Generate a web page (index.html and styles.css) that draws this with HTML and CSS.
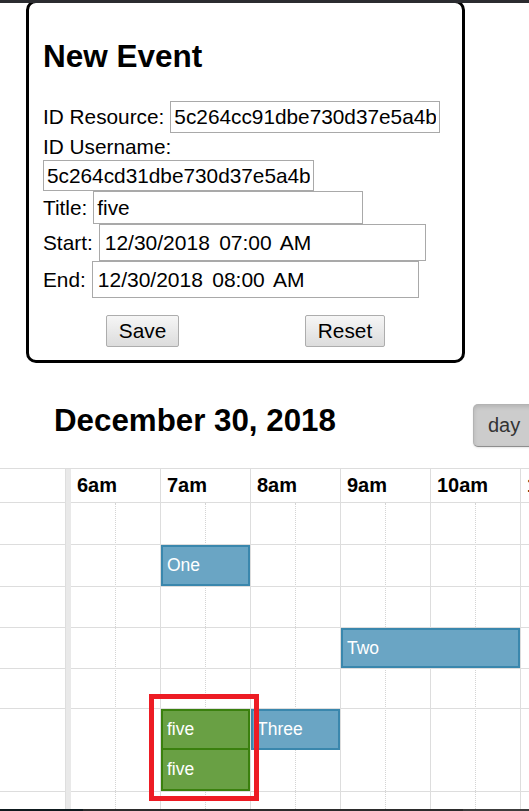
FILE: index.html
```html
<!DOCTYPE html>
<html lang="en">
<head>
<meta charset="utf-8">
<title>New Event</title>
<link rel="stylesheet" href="styles.css">
</head>
<body>
<div class="topbar"></div>

<form class="card">
  <h2 class="card-title">New Event</h2>
  <div class="form-row row-resource"><label>ID Resource:</label><input class="txt" type="text" value="5c264cc91dbe730d37e5a4b"></div>
  <div class="label-line">ID Username:</div>
  <div class="form-row row-user"><input class="txt txt-user" type="text" value="5c264cd31dbe730d37e5a4b"></div>
  <div class="form-row row-title"><label>Title:</label><input class="txt" type="text" value="five"></div>
  <div class="form-row row-date"><label>Start:</label><input class="txt dt" type="text" value="12/30/2018 07:00 AM"></div>
  <div class="form-row row-date"><label>End:</label><input class="txt dt" type="text" value="12/30/2018 08:00 AM"></div>
  <div class="actions">
    <button class="btn" type="button">Save</button>
    <button class="btn" type="button">Reset</button>
  </div>
</form>

<section class="cal">
  <div class="toolbar">
    <h2 class="cal-title">December 30, 2018</h2>
    <button class="view-btn" type="button">day</button>
  </div>

  <div class="sched">
    <div class="res-col">
      <div class="res-cell row-head"></div>
      <div class="res-cell row-a"></div>
      <div class="res-cell row-a"></div>
      <div class="res-cell row-b"></div>
      <div class="res-cell row-b"></div>
      <div class="res-cell row-c"></div>
      <div class="res-cell row-d"></div>
      <div class="res-cell row-b"></div>
    </div>
    <div class="divider"></div>
    <div class="time-col">
      <div class="time-head row-head">
        <div class="hour">6am</div>
        <div class="hour">7am</div>
        <div class="hour">8am</div>
        <div class="hour">9am</div>
        <div class="hour">10am</div>
        <div class="hour">11am</div>
        <div class="hour">12pm</div>
      </div>
      <div class="time-body">
        <div class="slats">
          <div class="slat half"></div><div class="slat"></div>
          <div class="slat half"></div><div class="slat"></div>
          <div class="slat half"></div><div class="slat"></div>
          <div class="slat half"></div><div class="slat"></div>
          <div class="slat half"></div><div class="slat"></div>
          <div class="slat half"></div><div class="slat"></div>
          <div class="slat half"></div><div class="slat"></div>
        </div>
        <div class="lanes">
          <div class="lane row-a"></div>
          <div class="lane row-a">
            <div class="evt" style="grid-column: 3 / 5">One</div>
          </div>
          <div class="lane row-b"></div>
          <div class="lane row-b">
            <div class="evt" style="grid-column: 7 / 11">Two</div>
          </div>
          <div class="lane row-c"></div>
          <div class="lane row-d lane-double">
            <div class="evt evt-green" style="grid-column: 3 / 5">five</div>
            <div class="evt evt-green evt-below" style="grid-column: 3 / 5">five</div>
            <div class="evt" style="grid-column: 5 / 7">Three</div>
          </div>
          <div class="lane row-b"></div>
        </div>
      </div>
    </div>
  </div>
</section>

<div class="highlight"></div>
<div class="bottombar"></div>
</body>
</html>
```

FILE: styles.css
```css
html, body {
  margin: 0;
  padding: 0;
  overflow: hidden;
}

body {
  position: relative;
  width: 529px;
  height: 811px;
  background: #fff;
  color: #000;
  font-family: "Liberation Sans", Arial, sans-serif;
}

.topbar {
  position: fixed;
  top: 0;
  left: 0;
  right: 0;
  height: 3px;
  background: #2b2c30;
  z-index: 10;
}

.bottombar {
  position: fixed;
  bottom: 0;
  left: 0;
  right: 0;
  height: 2px;
  background: linear-gradient(to right, #0e1a1e 0, #0e1a1e 83px, #2b2b2b 83px, #2b2b2b 463px, #3c3c3c 463px);
  z-index: 10;
}

/* ---------- form card ---------- */
.card {
  box-sizing: border-box;
  width: 439px;
  margin: 0 0 0 26px;
  border: 3px solid #000;
  border-radius: 10px;
  padding: 35px 14px 13px;
}

.card-title {
  margin: 0 0 27px;
  font-size: 31.5px;
  line-height: 36px;
  font-weight: bold;
}

.form-row {
  display: flex;
  align-items: center;
  gap: 6px;
  font-size: 20.8px;
}

.row-resource { height: 32px; }
.row-user { height: 31px; }
.row-title { height: 33px; }
.row-date { height: 37px; }

.label-line {
  height: 27px;
  line-height: 27px;
  font-size: 20.8px;
}

.txt {
  box-sizing: border-box;
  width: 270px;
  height: 100%;
  margin: 0;
  padding: 0 3px;
  border: 1px solid #a9a9a9;
  border-radius: 0;
  font-family: "Liberation Sans", Arial, sans-serif;
  font-size: 20.8px;
  color: #000;
  background: #fff;
  outline: none;
}

.txt-user { width: 271px; }

.dt {
  width: 327px;
  padding: 0 5px;
  font-size: 21px;
  word-spacing: 3.5px;
}

.actions {
  display: flex;
  justify-content: space-around;
  margin-top: 17px;
}

.btn {
  height: 32px;
  margin: 0;
  padding: 0 11.5px;
  border: 1px solid #adadad;
  border-radius: 2px;
  background: linear-gradient(#f6f6f6, #dcdcdc);
  font-family: "Liberation Sans", Arial, sans-serif;
  font-size: 20.8px;
  color: #000;
}

/* ---------- calendar ---------- */
.cal {
  margin-top: 40px;
}

.toolbar {
  display: grid;
  grid-template-columns: 473px 80px;
  height: 65px;
}

.cal-title {
  margin: 0;
  padding-left: 54px;
  font-size: 31.3px;
  line-height: 36px;
  font-weight: bold;
  white-space: nowrap;
}

.view-btn {
  justify-self: start;
  height: 43px;
  margin-top: 1px;
  padding: 0 14px;
  border: 1px solid rgba(0, 0, 0, 0.12);
  border-bottom-color: rgba(0, 0, 0, 0.3);
  border-radius: 5px;
  background: #ccc;
  box-shadow: inset 0 2px 4px rgba(0, 0, 0, 0.12), 0 1px 2px rgba(0, 0, 0, 0.1);
  font-family: "Liberation Sans", Arial, sans-serif;
  font-size: 20px;
  color: #333;
}

.sched {
  display: flex;
  width: 701px;
  border-top: 1px solid #ddd;
}

.res-col {
  flex: none;
  width: 65px;
}

.res-cell,
.lane,
.time-head {
  box-sizing: border-box;
  border-bottom: 1px solid #ddd;
}

.row-head { height: 34px; }
.row-a { height: 42px; }
.row-b { height: 41px; }
.row-c { height: 40px; }
.row-d { height: 83px; }

.divider {
  flex: none;
  box-sizing: border-box;
  width: 6px;
  background: #e9e9e9;
  border-left: 1px solid #dedede;
}

.time-col {
  flex: none;
  width: 630px;
}

.time-head {
  display: flex;
}

.hour {
  box-sizing: border-box;
  flex: none;
  width: 90px;
  padding-left: 6px;
  border-right: 1px solid #ddd;
  font-size: 20px;
  font-weight: bold;
  line-height: 33px;
  white-space: nowrap;
}

.time-body {
  display: grid;
}

.slats,
.lanes {
  grid-area: 1 / 1;
}

.slats {
  display: flex;
}

.slat {
  box-sizing: border-box;
  flex: none;
  width: 45px;
  border-right: 1px solid #ddd;
}

.slat.half {
  border-right: 1px dotted #d4d4d4;
}

.lane {
  display: grid;
  grid-template-columns: repeat(14, 45px);
  grid-template-rows: 1fr;
}

.lane-double {
  grid-template-rows: 1fr 1fr;
}

.evt {
  grid-row: 1;
  box-sizing: border-box;
  min-width: 0;
  margin-right: 1px;
  padding-left: 4px;
  display: flex;
  align-items: center;
  overflow: hidden;
  white-space: nowrap;
  border: 2px solid #3a87ad;
  background: #6aa5c4;
  color: #fff;
  font-size: 17.5px;
}

.evt-green {
  border-color: #3a800e;
  background: #69a044;
}

.evt-below {
  grid-row: 2;
  border-top: 0;
}

.highlight {
  position: absolute;
  left: 149px;
  top: 694px;
  width: 110px;
  height: 107px;
  box-sizing: border-box;
  border: 5px solid #ed1c24;
  z-index: 5;
}
```
